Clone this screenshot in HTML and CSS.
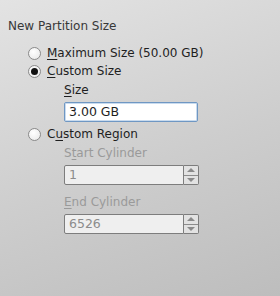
FILE: index.html
```html
<!DOCTYPE html>
<html lang="en">
<head>
    <meta charset="UTF-8">
    <title>New Partition Size</title>
    <link rel="stylesheet" href="styles.css">
</head>
<body>
    <div class="pane">
        <div class="title">New Partition Size</div>
        <div class="options">
            <div class="radio"><span class="knob"></span><span><u>M</u>aximum Size (50.00 GB)</span></div>
            <div class="radio checked"><span class="knob"></span><span><u>C</u>ustom Size</span></div>
            <div class="field">
                <div class="flabel"><u>S</u>ize</div>
                <div class="entry focus">3.00 GB</div>
            </div>
            <div class="radio"><span class="knob"></span><span>C<u>u</u>stom Region</span></div>
            <div class="field disabled">
                <div class="flabel">S<u>t</u>art Cylinder</div>
                <div class="spin">
                    <div class="entry">1</div>
                    <div class="arrows"><span class="up"></span><span class="down"></span></div>
                </div>
            </div>
            <div class="field disabled last">
                <div class="flabel"><u>E</u>nd Cylinder</div>
                <div class="spin">
                    <div class="entry">6526</div>
                    <div class="arrows"><span class="up"></span><span class="down"></span></div>
                </div>
            </div>
        </div>
    </div>
</body>
</html>
```

FILE: styles.css
```css
html, body { margin: 0; height: 100%; }
body { font-family: "DejaVu Sans", sans-serif; font-size: 12px; color: #1e1e1e; background: linear-gradient(160deg, #e3e3e3 0%, #cdcdcd 55%, #bdbdbd 100%); }
u { text-decoration: underline; text-underline-offset: 2px; }
.pane { padding: 19px 0 0 8px; }
.title { color: #383838; line-height: 15px; }
.options { display: flex; flex-direction: column; padding: 10px 0 0 20px; }
.radio { display: flex; align-items: center; gap: 6px; height: 18px; }
.knob { width: 11px; height: 11px; border: 1px solid #8a8a8a; border-radius: 50%; background: radial-gradient(circle at 40% 35%, #ffffff, #e6e6e6); display: flex; align-items: center; justify-content: center; }
.checked .knob::after { content: ""; width: 7px; height: 7px; border-radius: 50%; background: #111; }
.field { display: flex; flex-direction: column; padding: 3px 0 3px 36px; }
.field.last { padding-top: 7px; }
.flabel { line-height: 15px; margin-bottom: 4px; }
.entry { box-sizing: border-box; width: 134px; height: 20px; border: 1px solid #7d7d7d; border-radius: 2px; background: #fff; padding: 1px 4px 0; line-height: 16px; font-size: 12.5px; }
.entry.focus { border-color: #6f97c3; box-shadow: inset 0 0 0 1px #c9dbee; }
.disabled .flabel { color: #9a9a9a; }
.disabled .entry { background: #efefef; color: #8c8c8c; }
.spin { display: flex; }
.spin .entry { width: 120px; border-radius: 2px 0 0 2px; }
.arrows { display: flex; flex-direction: column; width: 15px; height: 20px; box-sizing: border-box; border: 1px solid #7d7d7d; border-left: none; border-radius: 0 2px 2px 0; background: #e2e2e2; }
.arrows span { flex: 1; display: flex; align-items: center; justify-content: center; }
.arrows .up { border-bottom: 1px solid #8c8c8c; }
.arrows .up::after { content: ""; border: 4px solid transparent; border-bottom: 4px solid #8a8a8a; border-top: none; }
.arrows .down::after { content: ""; border: 4px solid transparent; border-top: 4px solid #8a8a8a; border-bottom: none; }
```
